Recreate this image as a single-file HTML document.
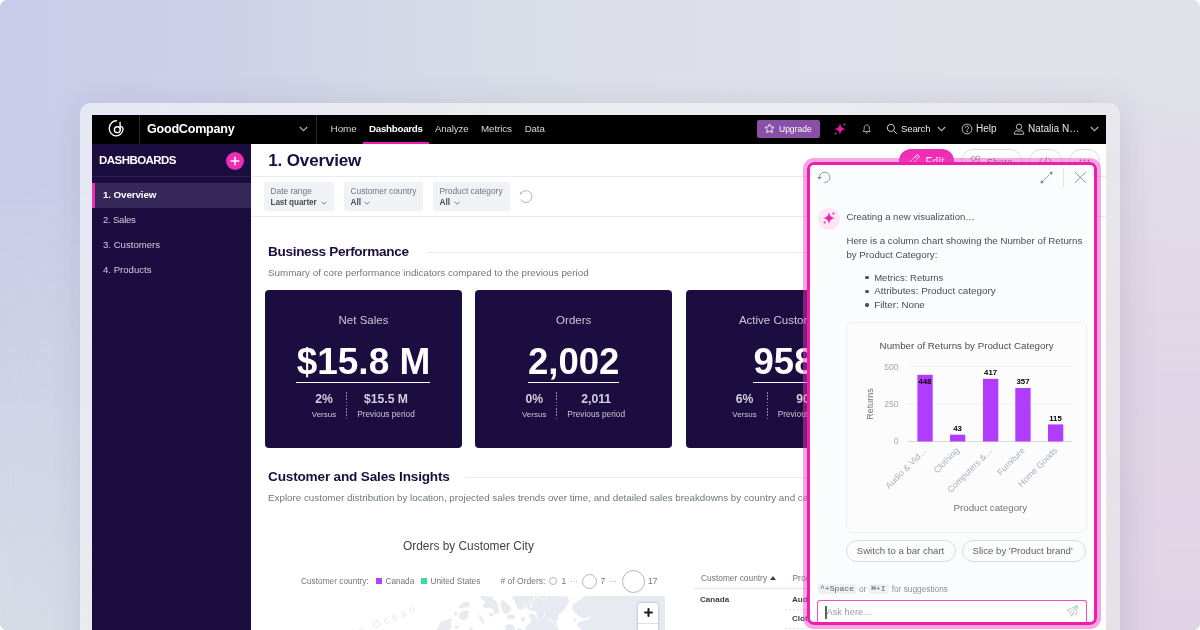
<!DOCTYPE html>
<html lang="en">
<head>
<meta charset="utf-8">
<title>GoodCompany – 1. Overview</title>
<style>
*{box-sizing:border-box;margin:0;padding:0}
html,body{width:1200px;height:630px;overflow:hidden;background:#fff}
body{font-family:"Liberation Sans",sans-serif;color:#1b0d3f;position:relative}
.abs,.t,svg.i{position:absolute}
.t{white-space:nowrap;line-height:1}
.b{font-weight:bold}
body>div{will-change:transform}
#bg{left:0;top:0;width:1200px;height:630px;border-radius:7px;overflow:hidden;
 background:
    linear-gradient(90deg,#c8cce9 0%,#cdd1e9 18%,#d6dae7 35%,#dcdfe8 50%,#dfe1ea 70%,#e0e2ea 100%);
}
#bg2{left:0;top:0;width:1200px;height:630px;background:linear-gradient(180deg,rgba(213,219,228,0) 28%,rgba(214,220,229,1) 100%);-webkit-mask-image:linear-gradient(90deg,#000 0%,transparent 55%);mask-image:linear-gradient(90deg,#000 0%,transparent 55%)}
#bg3{left:0;top:0;width:1200px;height:630px;background:linear-gradient(180deg,rgba(225,214,231,0) 12%,rgba(225,214,231,.55) 30%,rgba(225,213,230,.9) 50%,rgba(224,211,229,1) 100%);-webkit-mask-image:linear-gradient(90deg,transparent 60%,#000 93%);mask-image:linear-gradient(90deg,transparent 60%,#000 93%)}
#shadow{left:80px;top:103px;width:1040px;height:560px;border-radius:11px;background:linear-gradient(120deg,rgba(40,30,60,.02) 0%,rgba(40,30,60,.06) 45%,rgba(40,30,60,.14) 100%);box-shadow:4px 4px 34px rgba(50,52,80,.13)}
#frame{left:80px;top:103px;width:1040px;height:560px;border-radius:11px;background:rgba(255,255,255,.56)}
#app{left:92px;top:115px;width:1014.300px;height:515px;background:#fff;overflow:hidden}
#nav{left:0;top:0;width:1015px;height:29px;background:#000;color:#fff}
#side{left:0;top:29px;width:159px;height:486px;background:#1b0d3f;color:#fff}
#main{left:159px;top:29px;width:856px;height:486px;background:#fff;overflow:hidden}
.hl{background:#e8ebf0;height:1px}
.fbox{background:#f0f2f5;border-radius:3px;height:29px;top:38px}
.card{background:#1b0d3f;border-radius:4px;top:145.600px;height:158.200px;width:196.800px;color:#fff}
.pill{border:1px solid #d6dbe5;border-radius:12px;height:22px;background:#fff}
</style>
</head>
<body>
<div id="bg" class="abs"><div id="bg2" class="abs"></div><div id="bg3" class="abs"></div></div>
<div id="shadow" class="abs"></div><div id="frame" class="abs"></div>
<div id="app" class="abs">
 <div id="nav" class="abs">
  <svg class="i" style="left:15px;top:5px" width="18" height="18" viewBox="0 0 18 18" fill="none" stroke="#fff" stroke-width="1.350" stroke-linecap="round"><path d="M9.600 .800A6.900 7.550 0 1 0 16.050 9.250C16 7.600 15 6.500 13.300 6.450"/><circle cx="10.350" cy="9.650" r="2.950"/><path d="M13 2.300L13.300 9.650"/></svg>
  <div class="abs" style="left:47px;top:0;width:1px;height:29px;background:#2b2b2b"></div>
  <div class="t b" style="left:55px;top:7px;font-size:12.6px;line-height:14px;letter-spacing:-.25px">GoodCompany</div>
  <svg class="i" style="left:207px;top:11px" width="9" height="6" viewBox="0 0 9 6" fill="none" stroke="#adadad" stroke-width="1.2"><path d="M.8 1l3.7 3.7L8.2 1"/></svg>
  <div class="abs" style="left:224px;top:0;width:1px;height:29px;background:#2b2b2b"></div>
  <div class="t" style="left:238.500px;top:8px;font-size:9.9px;line-height:12px;color:#d9d9d9">Home</div>
  <div class="t b" style="left:277px;top:8px;font-size:9.8px;line-height:12px;letter-spacing:-.3px">Dashboards</div>
  <div class="abs" style="left:271px;top:27px;width:66px;height:2px;background:#ee1db0"></div>
  <div class="t" style="left:343px;top:8px;font-size:9.700px;line-height:12px;letter-spacing:-.15px;color:#d9d9d9">Analyze</div>
  <div class="t" style="left:389px;top:8px;font-size:9.800px;line-height:12px;letter-spacing:-.1px;color:#d9d9d9">Metrics</div>
  <div class="t" style="left:432.700px;top:8px;font-size:9.700px;line-height:12px;letter-spacing:-.1px;color:#d9d9d9">Data</div>
  <div class="abs" style="left:664.500px;top:4.500px;width:63px;height:18.500px;border-radius:2px;background:#8a4fa6"></div>
  <svg class="i" style="left:672px;top:8px" width="11" height="11" viewBox="0 0 11 11" fill="none" stroke="#fff" stroke-width="0.9" stroke-linejoin="round"><path d="M5.5 1l1.4 2.9 3.1.4-2.3 2.2.6 3.1-2.8-1.5-2.8 1.5.6-3.1L1 4.3l3.1-.4z"/></svg>
  <div class="t" style="left:687px;top:8px;font-size:8.500px;line-height:12px;color:#fff">Upgrade</div>
  <svg class="i" style="left:739px;top:4.500px" width="18" height="18" viewBox="0 0 18 18" fill="#dc1fa8"><path d="M9.00 3.20Q9.75 8.25 14.80 9.00Q9.75 9.75 9.00 14.80Q8.25 9.75 3.20 9.00Q8.25 8.25 9.00 3.20Z"/><circle cx="13.400" cy="4.600" r="1"/><circle cx="4.600" cy="13.500" r="1"/></svg>
  <svg class="i" style="left:770px;top:9px" width="9.500" height="10.400" viewBox="0 0 11 12" fill="none" stroke="#cdcdcd" stroke-width="0.9" stroke-linejoin="round"><path d="M5.500 1.200c-2 0-3 1.500-3 3.300v2.300L1.400 8.700h8.200L8.500 6.800V4.500c0-1.800-1-3.300-3-3.300z"/><path d="M4.300 9.800c.2.600.6.900 1.200.9s1-.3 1.200-.9"/></svg>
  <svg class="i" style="left:794px;top:8px" width="12" height="12" viewBox="0 0 12 12" fill="none" stroke="#cdcdcd" stroke-width="1"><circle cx="4.900" cy="4.900" r="3.600"/><path d="M7.500 7.500l3.400 3.400"/></svg>
  <div class="t" style="left:809px;top:7.700px;font-size:9.600px;line-height:12px;letter-spacing:-.17px;color:#e6e6e6">Search</div>
  <svg class="i" style="left:845px;top:11px" width="9" height="6" viewBox="0 0 9 6" fill="none" stroke="#adadad" stroke-width="1.200"><path d="M.8 1l3.700 3.700L8.200 1"/></svg>
  <svg class="i" style="left:869px;top:8px" width="12" height="12" viewBox="0 0 12 12" fill="none" stroke="#cdcdcd" stroke-width="0.9"><circle cx="6" cy="6" r="4.900"/><path d="M4.400 4.800c0-1 .7-1.600 1.600-1.600s1.600.6 1.600 1.500c0 1.100-1.500 1.200-1.500 2.400" stroke-linecap="round"/><circle cx="6.100" cy="8.700" r=".35" fill="#cdcdcd"/></svg>
  <div class="t" style="left:884px;top:8px;font-size:10px;line-height:12px;color:#e6e6e6">Help</div>
  <svg class="i" style="left:921px;top:8px" width="12" height="12" viewBox="0 0 12 12" fill="none" stroke="#cdcdcd" stroke-width="0.9" stroke-linejoin="round"><circle cx="6" cy="3.800" r="2.700"/><path d="M1.200 11.200c0-2.200 1.300-3.300 2.800-3.500.700.400 1.300.5 2 .5s1.300-.1 2-.5c1.500.2 2.800 1.300 2.800 3.500z"/></svg>
  <div class="t" style="left:936px;top:8px;font-size:10px;line-height:12px;color:#e6e6e6">Natalia N…</div>
  <svg class="i" style="left:998px;top:11px" width="9" height="6" viewBox="0 0 9 6" fill="none" stroke="#adadad" stroke-width="1.200"><path d="M.8 1l3.700 3.700L8.200 1"/></svg>
 </div>
 <div id="side" class="abs">
  <div class="t b" style="left:7px;top:9px;font-size:11.5px;line-height:14px;letter-spacing:-.55px">DASHBOARDS</div>
  <div class="abs" style="left:133.500px;top:7.500px;width:18px;height:18px;border-radius:50%;background:#ee2db4"></div>
  <svg class="i" style="left:137.500px;top:11.500px" width="10" height="10" viewBox="0 0 10 10" stroke="#fff" stroke-width="1.500" stroke-linecap="round"><path d="M5 1.200v7.600M1.200 5h7.600"/></svg>
  <div class="abs" style="left:0;top:32px;width:159px;height:1px;background:#2d2050"></div>
  <div class="abs" style="left:0;top:38.500px;width:159px;height:25px;background:#36285a"></div>
  <div class="abs" style="left:0;top:38.500px;width:3px;height:25px;background:#ee2db4"></div>
  <div class="t b" style="left:11px;top:45px;font-size:9.8px;line-height:12px;letter-spacing:-.1px">1. Overview</div>
  <div class="t" style="left:11px;top:70px;font-size:9.6px;line-height:12px;letter-spacing:-.25px;color:#d0ccdc">2. Sales</div>
  <div class="t" style="left:11px;top:95px;font-size:9.6px;line-height:12px;color:#d0ccdc">3. Customers</div>
  <div class="t" style="left:11px;top:120px;font-size:9.6px;line-height:12px;color:#d0ccdc">4. Products</div>
 </div>
 <div id="main" class="abs">
  <div class="t b" style="left:17.300px;top:6.800px;font-size:17px;line-height:20px;letter-spacing:-.15px">1. Overview</div>
  <div class="abs hl" style="left:0;top:32px;width:856px"></div>
  <div class="abs" style="left:648px;top:5px;width:55px;height:24px;border-radius:12px;background:#ee2db4"></div>
  <svg class="i" style="left:655.700px;top:10px" width="13" height="13" viewBox="0 0 13 13" fill="none" stroke="#fff" stroke-width="1" stroke-linejoin="round"><path d="M1.300 11.700l.8-3L9.300 1.500a1.500 1.500 0 0 1 2.200 2.200L4.300 10.900z"/><path d="M8.300 2.500l2.200 2.200" stroke-width=".8"/></svg>
  <div class="t b" style="left:674.500px;top:12px;font-size:10px;line-height:12px;color:#fff">Edit</div>
  <div class="abs pill" style="left:710px;top:5px;width:61px;height:24px"></div>
  <svg class="i" style="left:718px;top:11px" width="13" height="12" viewBox="0 0 13 12" fill="none" stroke="#8a92a0" stroke-width=".9"><circle cx="4.300" cy="3.600" r="2.200"/><circle cx="9" cy="3" r="2"/><path d="M.6 11c0-2.500 1.500-4 3.700-4s3.700 1.500 3.700 4M8.500 6.300c2.200-.4 4 1 4 3.700"/></svg><div class="t" style="left:735.500px;top:12px;font-size:9.800px;line-height:12px;color:#6d7680">Share</div>
  <div class="abs pill" style="left:778px;top:5px;width:33px;height:24px"></div><svg class="i" style="left:788px;top:12px" width="13" height="10" viewBox="0 0 13 10" fill="none" stroke="#8a92a0" stroke-width=".9"><path d="M3.500 1.500L.8 5l2.700 3.500M9.500 1.500L12.200 5 9.500 8.500M7.600.8L5.400 9.200"/></svg>
  <div class="abs pill" style="left:818px;top:5px;width:31px;height:24px"></div><svg class="i" style="left:828px;top:15px" width="11" height="3" viewBox="0 0 11 3" fill="#6d7680"><circle cx="1.500" cy="1.500" r=".9"/><circle cx="5.500" cy="1.500" r=".9"/><circle cx="9.500" cy="1.500" r=".9"/></svg>

  <div class="abs fbox" style="left:12.500px;width:70.500px"></div>
  <div class="t" style="left:19.500px;top:42px;font-size:8.350px;line-height:11px;color:#6d7680">Date range</div>
  <div class="t b" style="left:19.500px;top:52.500px;font-size:8.200px;line-height:11px;letter-spacing:-.1px;color:#464e56">Last quarter</div>
  <svg class="i" style="left:70px;top:56.500px" width="6" height="4" viewBox="0 0 6 4" fill="none" stroke="#6d7680" stroke-width=".9"><path d="M.5.700L3 3.200 5.500.7"/></svg>
  <div class="abs fbox" style="left:93px;width:79px"></div>
  <div class="t" style="left:99.500px;top:42px;font-size:8.350px;line-height:11px;color:#6d7680">Customer country</div>
  <div class="t b" style="left:99.500px;top:52.500px;font-size:8.300px;line-height:11px;color:#464e56">All</div>
  <svg class="i" style="left:113px;top:56.500px" width="6" height="4" viewBox="0 0 6 4" fill="none" stroke="#6d7680" stroke-width=".9"><path d="M.5.700L3 3.200 5.500.7"/></svg>
  <div class="abs fbox" style="left:182px;width:77px"></div>
  <div class="t" style="left:188.500px;top:42px;font-size:8.350px;line-height:11px;color:#6d7680">Product category</div>
  <div class="t b" style="left:188.500px;top:52.500px;font-size:8.300px;line-height:11px;color:#464e56">All</div>
  <svg class="i" style="left:202.500px;top:56.500px" width="6" height="4" viewBox="0 0 6 4" fill="none" stroke="#6d7680" stroke-width=".9"><path d="M.5.700L3 3.200 5.500.7"/></svg>
  <svg class="i" style="left:267px;top:45px" width="15" height="15" viewBox="0 0 15 15" fill="none" stroke="#adb4c2" stroke-width="1"><path d="M2.900 4.600A5.900 5.900 0 1 1 2.800 10.400"/><path d="M1.700 3.300l2.300.6-1.500 1.800z" fill="#9ea6b6" stroke="none"/></svg>
  <div class="abs hl" style="left:0;top:72px;width:856px"></div>

  <div class="t b" style="left:17px;top:99px;font-size:13.600px;line-height:18px;letter-spacing:-.33px">Business Performance</div>
  <div class="abs hl" style="left:176px;top:108px;width:663px"></div>
  <div class="t" style="left:17px;top:123px;font-size:9.820px;line-height:12px;color:#6d7680">Summary of core performance indicators compared to the previous period</div>

  <div class="abs card" style="left:14px">
    <div class="t" style="left:0;width:197px;text-align:center;top:23.400px;font-size:11.500px;line-height:14px;color:#cbc7d8">Net Sales</div>
    <div class="t b" style="left:0;width:197px;text-align:center;top:52.700px;font-size:37px;line-height:40px">$15.8 M</div>
    <div class="abs" style="left:31px;top:92.100px;width:134px;height:1.700px;background:#fff"></div>
    <div class="t b" style="left:39px;width:40px;text-align:center;top:102.900px;font-size:12.200px;line-height:14px;color:#d2cfdc">2%</div>
    <div class="t" style="left:39px;width:40px;text-align:center;top:119.900px;font-size:8px;line-height:11px;color:#cbc7d8">Versus</div>
    <div class="abs" style="left:81px;top:102px;width:1px;height:29px;background:repeating-linear-gradient(180deg,#8d87a6 0,#8d87a6 1.500px,transparent 1.500px,transparent 3.200px)"></div>
    <div class="t b" style="left:90px;width:62px;text-align:center;top:102.900px;font-size:12.200px;line-height:14px;color:#d2cfdc">$15.5 M</div>
    <div class="t" style="left:90px;width:62px;text-align:center;top:119.900px;font-size:8.300px;line-height:11px;color:#cbc7d8">Previous period</div>
  </div>
  <div class="abs card" style="left:224.200px">
    <div class="t" style="left:0;width:197px;text-align:center;top:23.400px;font-size:11.500px;line-height:14px;color:#cbc7d8">Orders</div>
    <div class="t b" style="left:0;width:197px;text-align:center;top:52.700px;font-size:36.500px;line-height:40px">2,002</div>
    <div class="abs" style="left:53px;top:92.100px;width:91px;height:1.700px;background:#fff"></div>
    <div class="t b" style="left:39px;width:40px;text-align:center;top:102.900px;font-size:12.200px;line-height:14px;color:#d2cfdc">0%</div>
    <div class="t" style="left:39px;width:40px;text-align:center;top:119.900px;font-size:8px;line-height:11px;color:#cbc7d8">Versus</div>
    <div class="abs" style="left:81px;top:102px;width:1px;height:29px;background:repeating-linear-gradient(180deg,#8d87a6 0,#8d87a6 1.500px,transparent 1.500px,transparent 3.200px)"></div>
    <div class="t b" style="left:90px;width:62px;text-align:center;top:102.900px;font-size:12.200px;line-height:14px;color:#d2cfdc">2,011</div>
    <div class="t" style="left:90px;width:62px;text-align:center;top:119.900px;font-size:8.300px;line-height:11px;color:#cbc7d8">Previous period</div>
  </div>
  <div class="abs card" style="left:434.500px">
    <div class="t" style="left:0;width:197px;text-align:center;top:23.400px;font-size:11.500px;line-height:14px;color:#cbc7d8">Active Customers</div>
    <div class="t b" style="left:0;width:197px;text-align:center;top:52.700px;font-size:36.500px;line-height:40px">958</div>
    <div class="abs" style="left:67px;top:92.100px;width:63px;height:1.700px;background:#fff"></div>
    <div class="t b" style="left:39px;width:40px;text-align:center;top:102.900px;font-size:12.200px;line-height:14px;color:#d2cfdc">6%</div>
    <div class="t" style="left:39px;width:40px;text-align:center;top:119.900px;font-size:8px;line-height:11px;color:#cbc7d8">Versus</div>
    <div class="abs" style="left:81px;top:102px;width:1px;height:29px;background:repeating-linear-gradient(180deg,#8d87a6 0,#8d87a6 1.500px,transparent 1.500px,transparent 3.200px)"></div>
    <div class="t b" style="left:90px;width:62px;text-align:center;top:102.900px;font-size:12.200px;line-height:14px;color:#d2cfdc">904</div>
    <div class="t" style="left:90px;width:62px;text-align:center;top:119.900px;font-size:8.300px;line-height:11px;color:#cbc7d8">Previous period</div>
  </div>

  <div class="t b" style="left:17px;top:324px;font-size:13.600px;line-height:18px;letter-spacing:-.18px">Customer and Sales Insights</div>
  <div class="abs hl" style="left:215px;top:333px;width:624px"></div>
  <div class="t" style="left:17px;top:347.500px;font-size:9.800px;line-height:12px;color:#6d7680">Explore customer distribution by location, projected sales trends over time, and detailed sales breakdowns by country and category</div>

  <div class="t" style="left:152px;top:395px;font-size:11.900px;line-height:15px;color:#3c4550">Orders by Customer City</div>
  <div class="t" style="left:50px;top:432px;font-size:8.300px;line-height:10px;color:#6d7680">Customer country:</div>
  <div class="abs" style="left:125px;top:434px;width:6px;height:6px;background:#b23ffc"></div>
  <div class="t" style="left:134.500px;top:432px;font-size:8.300px;line-height:10px;letter-spacing:-.06px;color:#6d7680">Canada</div>
  <div class="abs" style="left:170px;top:434px;width:6px;height:6px;background:#3ddc9c"></div>
  <div class="t" style="left:179.500px;top:432px;font-size:8.300px;line-height:10px;color:#6d7680">United States</div>
  <div class="t" style="left:249.500px;top:431.500px;font-size:8.500px;line-height:10px;color:#6d7680"># of Orders:</div>
  <div class="abs" style="left:298px;top:433px;width:8px;height:8px;border-radius:50%;border:1px solid #b0b5be"></div>
  <div class="t" style="left:310.500px;top:432px;font-size:8.500px;line-height:10px;color:#6d7680">1</div>
  <div class="t" style="left:319px;top:433px;font-size:8px;line-height:10px;color:#9aa2ad;letter-spacing:0">···</div>
  <div class="abs" style="left:330.500px;top:429.500px;width:15px;height:15px;border-radius:50%;border:1px solid #b0b5be"></div>
  <div class="t" style="left:349.500px;top:432px;font-size:8.500px;line-height:10px;color:#6d7680">7</div>
  <div class="t" style="left:358px;top:433px;font-size:8px;line-height:10px;color:#9aa2ad;letter-spacing:0">···</div>
  <div class="abs" style="left:370.500px;top:425.500px;width:23px;height:23px;border-radius:50%;border:1px solid #b0b5be"></div>
  <div class="t" style="left:397px;top:432px;font-size:8.500px;line-height:10px;color:#6d7680">17</div>

  <svg class="i" style="left:101px;top:452px" width="313" height="40" viewBox="0 0 313 40"><path d="M107.3,11.3 L108.9,8.6 L112.7,6.5 L115.9,6.1 L117.5,8.1 L117.2,11.1 L113.8,10.5 L110.5,11.9Z M107.8,17.3 L110.5,15.5 L114.8,15.1 L117.0,16.2 L115.4,18.4 L115.9,21.1 L113.8,23.3 L110.0,23.8 L107.5,21.1Z M102.4,16.8 L104.0,15.7 L105.1,17.8 L104.0,19.5 L102.7,18.7Z M85.0,34.0 L87.8,28.7 L89.9,25.4 L94.3,24.9 L98.0,22.7 L99.7,24.3 L98.0,27.6 L99.1,30.8 L97.5,34.0Z M102.9,30.8 L105.6,30.6 L106.0,31.9 L103.5,32.1Z M117.5,34.0 L118.6,31.4 L120.3,31.9 L120.0,34.0Z M128.4,0.3 L136.5,0.3 L137.0,2.1 L139.8,1.0 L141.4,4.3 L144.1,5.9 L145.2,10.3 L146.8,14.0 L146.0,17.3 L143.0,17.6 L141.9,13.5 L138.7,11.3 L134.3,11.9 L131.1,10.8 L131.6,8.1 L134.3,7.0 L132.7,4.3 L130.0,3.2Z M137.4,18.1 L139.8,17.3 L141.4,18.9 L139.8,20.0 L137.8,19.5Z M127.3,19.5 L128.7,19.8 L130.5,23.8 L132.2,26.5 L131.1,27.4 L128.9,24.9Z M149.2,5.2 L151.8,4.8 L154.7,7.7 L158.0,10.6 L158.4,13.5 L156.3,16.8 L153.0,17.7 L150.9,15.2 L149.7,11.0Z M155.1,20.2 L157.2,19.3 L161.8,19.5 L163.0,21.0 L161.8,22.5 L156.3,22.7Z M169.2,21.8 L170.9,21.0 L172.6,22.7 L172.6,24.8 L170.5,25.6 L169.5,23.9Z M153.4,30.2 L156.3,28.9 L160.5,29.3 L162.6,31.8 L162.2,34.0 L154.2,34.0Z M165.5,33.1 L167.6,32.5 L169.7,33.5 L169.8,34.0 L165.1,34.0Z M160.5,1.8 L162.6,0.0 L215.5,0.0 L216.5,6.0 L213.8,10.2 L212.6,13.1 L210.1,15.6 L206.3,17.8 L205.5,21.0 L205.9,23.9 L203.0,26.0 L205.5,29.3 L206.3,34.0 L173.8,34.0 L174.2,31.0 L176.8,28.5 L180.1,26.0 L178.8,22.7 L177.3,20.2 L178.4,18.3 L180.9,18.1 L183.4,20.2 L184.7,22.2 L185.9,21.0 L185.1,17.8 L183.8,15.6 L181.3,13.9 L180.1,14.8 L177.2,13.1 L174.7,11.8 L173.0,9.3 L171.8,12.2 L168.0,13.3 L165.5,11.4 L164.2,7.7 L162.6,4.3Z M235.5,0.0 L248.0,0.0 L289.7,0.0 L313.0,0.0 L313.0,34.0 L231.3,34.0 L228.0,31.8 L225.1,29.3 L226.3,27.0 L231.3,25.2 L236.3,23.9 L239.2,22.2 L238.4,20.3 L234.7,21.0 L231.3,22.0 L228.0,20.3 L224.7,17.8 L222.2,15.6 L220.5,12.2 L221.3,9.3 L223.8,6.8 L228.0,4.3 L231.3,1.8Z M221.8,23.1 L223.4,22.5 L224.2,23.9 L223.0,24.9 L221.8,24.3Z" fill="#e7eaf0" stroke="#e7eaf0" stroke-width="1" stroke-linejoin="round"/><path d="M183.0,0.0 L181.2,3.5 L179.8,8.5 L179.2,12.7 M177.2,2.7 L177.8,6.8 L178.5,11.4 M173.0,8.5 L174.8,11.4 M187.6,0.3 L184.7,1.7 L182.0,3.9 M187.2,1.8 L191.3,3.9 L193.7,7.0 M195.9,2.2 L193.0,3.7 M206.8,1.2 L211.3,0.8 L215.1,1.8 M193.4,15.6 L192.3,19.8 L189.2,22.8 L185.9,23.5 L183.4,21.0 M195.1,25.3 L198.0,23.7 L201.8,26.7 L203.4,29.8 L205.5,29.3" fill="none" stroke="#fff" stroke-width=".9" stroke-linecap="round" stroke-linejoin="round" opacity=".85"/><text transform="translate(67.300,14.500) rotate(-22.200)" font-family="Liberation Sans, sans-serif" font-size="10.500" fill="#e6e9ee" letter-spacing="3.600" text-anchor="end">Arctic Ocean</text></svg>
  <div class="abs" style="left:386px;top:457.500px;width:21.500px;height:40px;background:#fff;border:1px solid #d0d3d8;border-radius:4px;box-shadow:0 0 0 1px rgba(0,0,0,.04)"></div>
  <div class="abs" style="left:387px;top:478.500px;width:19.500px;height:1px;background:#dcdfe3"></div>
  <svg class="i" style="left:392.500px;top:464px" width="9" height="9" viewBox="0 0 9 9" stroke="#1f1f1f" stroke-width="2.100" stroke-linecap="round"><path d="M4.500 1.100v6.800M1.100 4.500h6.800"/></svg>

  <div class="t" style="left:450px;top:429px;font-size:8.400px;line-height:11px;color:#6d7680">Customer country</div>
  <div class="abs" style="left:519px;top:431.700px;width:0;height:0;border-left:3.200px solid transparent;border-right:3.200px solid transparent;border-bottom:4.200px solid #3a4149"></div>
  <div class="t" style="left:541.500px;top:429px;font-size:8.400px;line-height:11px;color:#6d7680">Product category</div>
  <div class="abs" style="left:442px;top:444px;width:114px;height:1px;background:#e2e5ea"></div>
  <div class="t b" style="left:449px;top:449.500px;font-size:8.100px;line-height:11px;color:#3a4149">Canada</div>
  <div class="t b" style="left:541px;top:449.500px;font-size:8.100px;line-height:11px;color:#3a4149">Audio &amp; Video</div>
  <div class="abs" style="left:533.500px;top:464.700px;width:22px;height:1px;background:repeating-linear-gradient(90deg,#dfe2e8 0,#dfe2e8 2px,transparent 2px,transparent 4px)"></div>
  <div class="t b" style="left:541px;top:468.800px;font-size:8.100px;line-height:11px;color:#3a4149">Clothing</div>
  <div class="abs" style="left:533.500px;top:484px;width:22px;height:1px;background:repeating-linear-gradient(90deg,#dfe2e8 0,#dfe2e8 2px,transparent 2px,transparent 4px)"></div>
 </div>
</div>
<div id="chat" class="abs" style="left:0;top:0;width:1200px;height:630px">
 <div class="abs" style="left:808px;top:163px;width:288px;height:461px;border-radius:6px;background:#fbfcfd"></div>
 <svg class="i" style="left:810px;top:165px" width="40" height="21" viewBox="0 0 40 21" fill="none" stroke="#878d9b" stroke-width=".95"><path d="M9.500 12.300A5.200 5.200 0 1 1 14.200 17.500"/><path d="M7.200 12h4.600l-2.300 2.500z" fill="#878d9b" stroke="none"/></svg>
 <svg class="i" style="left:1030px;top:165px" width="64" height="25" viewBox="0 0 64 25" fill="none" stroke="#7b8192" stroke-width=".75"><path d="M11.500 17.400L21.600 7.700"/><path d="M22.600 6.700l-3.300.6 2.700 2.700zM10.500 18.400l3.300-.6-2.700-2.700z" fill="#7b8192" stroke="none"/><path d="M44.800 6.900l11.100 11M55.900 6.900l-11.100 11" stroke-width=".85"/></svg>
 <div class="abs" style="left:1063px;top:167.500px;width:1px;height:19.500px;background:#dfe3ea"></div>
 
 <div class="abs" style="left:817.500px;top:207.600px;width:22px;height:22px;border-radius:50%;background:#fce5f6"></div>
 <svg class="i" style="left:819.600px;top:209.100px" width="18" height="18" viewBox="0 0 18 18" fill="#ea22b0"><path d="M9.00 3.20Q9.75 8.25 14.80 9.00Q9.75 9.75 9.00 14.80Q8.25 9.75 3.20 9.00Q8.25 8.25 9.00 3.20Z"/><circle cx="13.400" cy="4.600" r="1"/><circle cx="4.600" cy="13.500" r="1"/></svg>
<div class="t" style="left:846.4px;top:211.0px;font-size:9.550px;line-height:12px;color:#464e56;">Creating a new visualization…</div>
<div class="t" style="left:846.4px;top:235.0px;font-size:9.700px;line-height:12px;color:#464e56;">Here is a column chart showing the Number of Returns</div>
<div class="t" style="left:846.4px;top:248.700px;font-size:9.700px;line-height:12px;color:#464e56;">by Product Category:</div>
<div class="abs" style="left:865.350px;top:276.150px;width:3.300px;height:3.300px;border-radius:50%;background:#464e56"></div><div class="t" style="left:874.2px;top:271.800px;font-size:9.500px;line-height:12px;color:#464e56;">Metrics: Returns</div>
<div class="abs" style="left:865.350px;top:289.750px;width:3.300px;height:3.300px;border-radius:50%;background:#464e56"></div><div class="t" style="left:874.2px;top:285.0px;font-size:9.850px;line-height:12px;color:#464e56;">Attributes: Product category</div>
<div class="abs" style="left:865.350px;top:303.350px;width:3.300px;height:3.300px;border-radius:50%;background:#464e56"></div><div class="t" style="left:874.2px;top:298.6px;font-size:9.8px;line-height:12px;color:#464e56;">Filter: None</div>
<div class="abs" style="left:846px;top:321.500px;width:240.500px;height:211px;border:1px solid #eceef3;border-radius:6px;background:#fcfcfd"></div>
<div class="t" style="left:879.6px;top:339.6px;font-size:9.750px;line-height:12px;color:#464e56;">Number of Returns by Product Category</div>
<svg class="i" style="left:0;top:0" width="1200" height="630" viewBox="0 0 1200 630" font-family="Liberation Sans, sans-serif">
<line x1="908" x2="1072" y1="366.5" y2="366.5" stroke="#eef0f4" stroke-width="1"/>
<line x1="908" x2="1072" y1="404" y2="404" stroke="#eef0f4" stroke-width="1"/>
<line x1="908" x2="1072" y1="441.5" y2="441.5" stroke="#d5dbe6" stroke-width="1"/>
<text x="898.5" y="369.7" font-size="8.6" fill="#a0a6b6" text-anchor="end">500</text>
<text x="898.5" y="407.2" font-size="8.6" fill="#a0a6b6" text-anchor="end">250</text>
<text x="898.5" y="443.800" font-size="8.6" fill="#a0a6b6" text-anchor="end">0</text>
<text transform="translate(873,404) rotate(-90)" font-size="9" fill="#6d7680" text-anchor="middle">Returns</text>
<rect x="917.4" y="374.8" width="15.3" height="66.7" fill="#b13cfb"/>
<text x="924.9" y="383.600" font-size="7.8" font-weight="bold" fill="#000" text-anchor="middle">448</text>
<text transform="translate(927.2,451.200) rotate(-45)" font-size="8.700" fill="#a9aebc" text-anchor="end">Audio &amp; Vid…</text>
<rect x="950" y="434.7" width="15.3" height="6.8" fill="#b13cfb"/>
<text x="957.5" y="431.3" font-size="7.8" font-weight="bold" fill="#000" text-anchor="middle">43</text>
<text transform="translate(959.8,451.200) rotate(-45)" font-size="8.700" fill="#a9aebc" text-anchor="end">Clothing</text>
<rect x="983" y="378.8" width="15.3" height="62.7" fill="#b13cfb"/>
<text x="990.6" y="375.4" font-size="7.8" font-weight="bold" fill="#000" text-anchor="middle">417</text>
<text transform="translate(992.9,451.200) rotate(-45)" font-size="8.700" fill="#a9aebc" text-anchor="end">Computers &amp;…</text>
<rect x="1015.3" y="388" width="15.3" height="53.5" fill="#b13cfb"/>
<text x="1023" y="383.700" font-size="7.8" font-weight="bold" fill="#000" text-anchor="middle">357</text>
<text transform="translate(1025.3,451.200) rotate(-45)" font-size="8.700" fill="#a9aebc" text-anchor="end">Furniture</text>
<rect x="1048" y="424.4" width="15.3" height="17.1" fill="#b13cfb"/>
<text x="1055.5" y="421.0" font-size="7.8" font-weight="bold" fill="#000" text-anchor="middle">115</text>
<text transform="translate(1057.8,451.200) rotate(-45)" font-size="8.700" fill="#a9aebc" text-anchor="end">Home Goods</text>
</svg>
<div class="t" style="left:953.5px;top:502.0px;font-size:9.750px;line-height:12px;color:#6d7680;">Product category</div>
<div class="abs pill" style="left:846px;top:539.700px;width:109.500px;height:22px;border-radius:11px;background:#fcfcfd"></div><div class="t" style="left:856.8px;top:545.4px;font-size:9.6px;line-height:12px;color:#5a636d;">Switch to a bar chart</div>
<div class="abs pill" style="left:962.300px;top:539.700px;width:123.500px;height:22px;border-radius:11px;background:#fcfcfd"></div><div class="t" style="left:972.6px;top:545.4px;font-size:9.6px;line-height:12px;color:#5a636d;">Slice by 'Product brand'</div>
<div class="abs" style="left:817.500px;top:583.500px;width:38.500px;height:10px;border-radius:2px;background:#eef0f4"></div><div class="t" style="left:820px;top:583.6px;font-size:8.100px;line-height:10px;color:#59616b;font-family:'Liberation Mono',monospace;">^+Space</div><div class="t" style="left:859px;top:583.6px;font-size:8.3px;line-height:10px;color:#8a929c;">or</div><div class="abs" style="left:868.500px;top:583.500px;width:20.500px;height:10px;border-radius:2px;background:#eef0f4"></div><div class="t" style="left:871px;top:583.6px;font-size:8.100px;line-height:10px;color:#59616b;font-family:'Liberation Mono','DejaVu Sans Mono',monospace;">⌘+I</div><div class="t" style="left:891.7px;top:583.6px;font-size:8.3px;line-height:10px;color:#8a929c;">for suggestions</div>
<div class="abs" style="left:817px;top:600px;width:270px;height:24px;border:1px solid #f04dc0;border-bottom:0;border-radius:3px 3px 0 0;background:#fff"></div><div class="abs" style="left:825.300px;top:605.500px;width:1.400px;height:13px;background:#5a5f66"></div><div class="t" style="left:826.5px;top:606.0px;font-size:9.300px;line-height:12px;color:#949ca8;">Ask here…</div><svg class="i" style="left:1065px;top:604px" width="14" height="14" viewBox="0 0 14 14" fill="none" stroke="#b9c0cc" stroke-width=".8" stroke-linejoin="round"><path d="M12.500 1.500L1.500 6.200l3.600 1.500 1.300 4.500 1.900-2.900 3 1.700z"/><path d="M12.500 1.500L5.100 7.700M12.500 1.500L6.400 12.200"/></svg>
<div class="abs" style="left:807px;top:162px;width:290px;height:463px;border:3px solid #ee1db0;border-radius:7px;box-shadow:0 0 0 4px rgba(240,60,190,.46)"></div>
</div>
</body>
</html>
